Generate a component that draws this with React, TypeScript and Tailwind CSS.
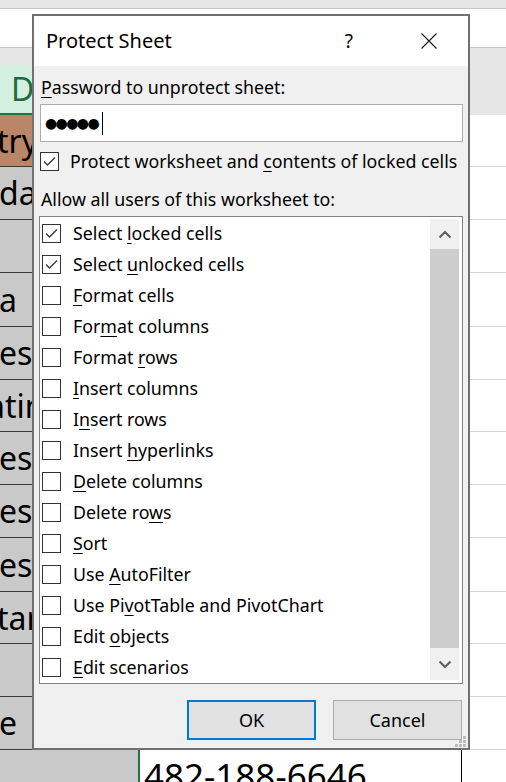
import React from 'react';

// left column of the sheet that peeks out beside the dialog
const sheetRows: { h: number; text: string; shift: number }[] = [
    { h: 52, text: 'try', shift: -3 },
    { h: 53, text: 'da', shift: -1 },
    { h: 53, text: '', shift: 0 },
    { h: 54, text: 'a', shift: -1 },
    { h: 53, text: 'es', shift: -1 },
    { h: 52, text: 'atin', shift: -13 },
    { h: 53, text: 'es', shift: -1 },
    { h: 53, text: 'es', shift: -1 },
    { h: 54, text: 'es', shift: -1 },
    { h: 52, text: 'tar', shift: -3 },
    { h: 53, text: '', shift: 0 },
    { h: 53, text: 'e', shift: -1 },
];

// [before, access key, after, checked]
const permissions: [string, string, string, boolean][] = [
    ['Select ', 'l', 'ocked cells', true],
    ['Select ', 'u', 'nlocked cells', true],
    ['', 'F', 'ormat cells', false],
    ['For', 'm', 'at columns', false],
    ['Format ', 'r', 'ows', false],
    ['', 'I', 'nsert columns', false],
    ['I', 'n', 'sert rows', false],
    ['Insert ', 'h', 'yperlinks', false],
    ['', 'D', 'elete columns', false],
    ['Delete ro', 'w', 's', false],
    ['', 'S', 'ort', false],
    ['Use ', 'A', 'utoFilter', false],
    ['Use Pi', 'v', 'otTable and PivotChart', false],
    ['Edit ', 'o', 'bjects', false],
    ['', 'E', 'dit scenarios', false],
];

const Key = ({ k }: { k: string }) => <span className="underline underline-offset-[3px] decoration-1">{k}</span>;

const CheckBox = ({ checked }: { checked: boolean }) => (
    <div className="w-[19px] h-[19px] shrink-0 border border-[#333333] bg-white flex items-center justify-center">
        {checked && (
            <svg width="15" height="15" viewBox="0 0 15 15">
                <path d="M2 7.5 L5.5 11 L13 3.5" fill="none" stroke="#3a3a3a" strokeWidth="1.4" />
            </svg>
        )}
    </div>
);

const Chevron = ({ up }: { up?: boolean }) => (
    <svg width="14" height="9" viewBox="0 0 14 9">
        <path d={up ? 'M1.5 7.5 L7 2 L12.5 7.5' : 'M1.5 1.5 L7 7 L12.5 1.5'} fill="none" stroke="#606060" strokeWidth="2.2" />
    </svg>
);

export default function App() {
    return (
        <div className="relative w-[506px] h-[782px] overflow-hidden bg-white font-['Noto_Sans',sans-serif]">
            {/* sheet behind the dialog */}
            <div className="h-[8px] bg-[#e6e6e6]" />
            <div className="h-[39px] border-t border-[#c6c6c6] bg-white" />
            <div className="flex h-[68px] border-t border-[#c6c6c6]">
                <div className="w-[138px] flex flex-col">
                    <div className="h-[17px] bg-[#e6e6e6]" />
                    <div className="flex-1 bg-[#d3f0e0] border-b-2 border-[#217346] flex items-center pl-[11px] text-[32px] text-[#1e6b3f] leading-none">D</div>
                </div>
                <div className="flex-1 bg-[#e6e6e6]" />
            </div>
            {sheetRows.map((r, i) => (
                <div key={i} className="flex" style={{ height: r.h }}>
                    <div className={`w-[138px] overflow-hidden border-b border-[#3a3a3a] flex items-center text-[32px] text-black leading-none whitespace-nowrap ${i === 0 ? 'bg-[#ba8668]' : 'bg-[#c9c9c9]'}`}>
                        <span style={{ marginLeft: r.shift }}>{r.text}</span>
                    </div>
                    <div className="flex-1 border-b border-[#d4d4d4] bg-white" />
                </div>
            ))}
            <div className="flex h-[32px]">
                <div className="w-[140px] bg-[#c9c9c9] border-r-2 border-[#217346]" />
                <div className="w-[322px] border-r border-black bg-white pl-[4px] text-[35px] leading-none pt-[8px] text-black whitespace-nowrap">482-188-6646</div>
                <div className="flex-1 bg-white" />
            </div>

            {/* Protect Sheet dialog */}
            <div className="absolute left-[32px] top-[14px] w-[438px] h-[736px] border-2 border-[#707070] bg-[#f0f0f0] flex flex-col text-[17.8px] text-black font-['Noto_Sans',sans-serif]">
                <div className="h-[50px] bg-white flex items-center pl-[12px] shrink-0">
                    <span className="text-[20px]">Protect Sheet</span>
                    <span className="ml-auto text-[19px]">?</span>
                    <svg className="ml-[68px] mr-[31px]" width="16" height="16" viewBox="0 0 16 16">
                        <path d="M0.5 0.5 L15.5 15.5 M15.5 0.5 L0.5 15.5" stroke="#1a1a1a" strokeWidth="1.1" />
                    </svg>
                </div>
                <div className="flex-1 flex flex-col pl-[6px] pr-[5px] relative">
                    <div className="mt-[10px] h-[22px] leading-[22px] pl-[1px]">
                        <Key k="P" />assword to unprotect sheet:
                    </div>
                    <div className="mt-[6px] h-[38px] border border-[#adadad] bg-white flex items-center pl-[4px]">
                        <span className="text-[14px] tracking-[-1.6px] leading-none font-['DejaVu_Sans',sans-serif]">●●●●●</span>
                        <div className="ml-[4px] w-px h-[23px] bg-black" />
                    </div>
                    <div className="mt-[10px] h-[19px] flex items-center gap-[11px]">
                        <CheckBox checked />
                        <span className="leading-none">Protect worksheet and <Key k="c" />ontents of locked cells</span>
                    </div>
                    <div className="mt-[17px] h-[22px] leading-[22px] pl-[1px]">Allow all users of this worksheet to:</div>
                    <div className="mt-[6px] ml-[-1px] h-[468px] border border-[#828282] bg-white flex">
                        <div className="flex-1 flex flex-col pt-[1px] pl-[2px]">
                            {permissions.map(([a, k, b, c], i) => (
                                <div key={i} className="h-[31px] flex items-center gap-[12px]">
                                    <CheckBox checked={c} />
                                    <span className="leading-none whitespace-nowrap">{a}<Key k={k} />{b}</span>
                                </div>
                            ))}
                        </div>
                        <div className="w-[29px] mt-[2px] mb-[3px] mr-[3px] flex flex-col">
                            <div className="h-[30px] bg-[#f0f0f0] flex items-center justify-center"><Chevron up /></div>
                            <div className="flex-1 bg-[#cdcdcd]" />
                            <div className="h-[32px] bg-[#f0f0f0] flex items-center justify-center"><Chevron /></div>
                        </div>
                    </div>
                    <div className="mt-[16px] flex justify-end gap-[17px] pr-[1px]">
                        <button className="w-[129px] h-[40px] border-2 border-[#0078d7] bg-[#e1e1e1] text-[18px]">OK</button>
                        <button className="w-[129px] h-[40px] border border-[#adadad] bg-[#e1e1e1] text-[18px]">Cancel</button>
                    </div>
                    {/* resize grip */}
                    <div className="absolute right-[2px] bottom-[1px] grid grid-cols-3 gap-[1px]">
                        <div className="w-[3px] h-[3px]" />
                        <div className="w-[3px] h-[3px]" />
                        <div className="w-[3px] h-[3px] bg-[#bcbcbc]" />
                        <div className="w-[3px] h-[3px]" />
                        <div className="w-[3px] h-[3px] bg-[#bcbcbc]" />
                        <div className="w-[3px] h-[3px] bg-[#bcbcbc]" />
                        <div className="w-[3px] h-[3px] bg-[#bcbcbc]" />
                        <div className="w-[3px] h-[3px] bg-[#bcbcbc]" />
                        <div className="w-[3px] h-[3px] bg-[#bcbcbc]" />
                    </div>
                </div>
            </div>
        </div>
    );
}
